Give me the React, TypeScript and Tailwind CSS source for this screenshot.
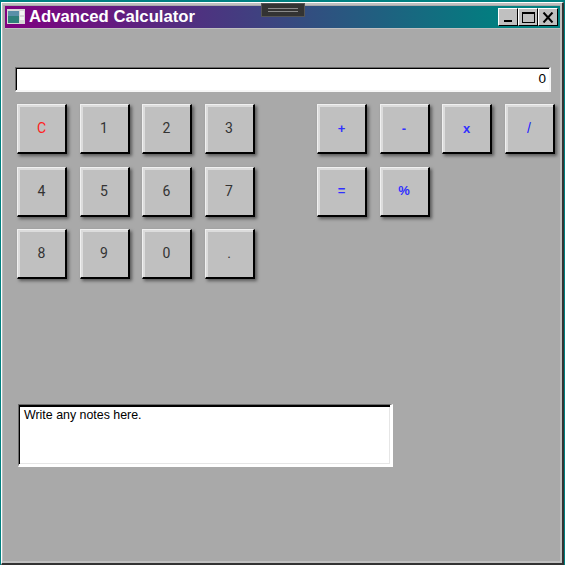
const LEFT_KEYS = ['C', '1', '2', '3', '4', '5', '6', '7', '8', '9', '0', '.'];
const RIGHT_KEYS = ['+', '-', 'x', '/', '=', '%'];

function Key({ label, color }: { label: string; color: string }) {
  return (
    <button
      className={`w-[50px] h-[50px] bg-[#c0c0c0] flex items-center justify-center border-t border-l border-t-[#f0f0f0] border-l-[#f0f0f0] border-b-2 border-r-2 border-b-black border-r-black shadow-[inset_2px_2px_0_#dcdcdc,2px_2px_3px_#5a5a5a] ${color}`}
    >
      {label}
    </button>
  );
}

function WinButton({ children }: { children: React.ReactNode }) {
  return (
    <div className="w-[20px] h-[18px] bg-[#c0c0c0] border-t border-l border-t-white border-l-white border-b border-r border-b-black border-r-black flex items-center justify-center">
      {children}
    </div>
  );
}

export default function App() {
  return (
    <div className="w-[565px] h-[565px] relative bg-[#008080] pt-[2px] pl-[1px] pr-[1px] font-['Liberation_Sans',Arial,sans-serif] overflow-hidden">
      {/* docked grab handle */}
      <div className="absolute left-[261px] top-[3px] w-[44px] h-[14px] bg-[#333333] border border-[#555555] flex flex-col items-center justify-center gap-[2px]">
        <div className="w-[30px] h-px bg-[#8a8a8a]" />
        <div className="w-[30px] h-px bg-[#8a8a8a]" />
      </div>

      <div className="h-[563px] bg-[#a9a9a9] border-t border-l border-t-white border-l-white border-r-2 border-b-2 border-r-[#333333] border-b-[#333333] flex flex-col shadow-[inset_-2px_-2px_0_#c0c0c0,inset_1px_2px_0_#c0c0c0]">
        <div className="mt-[3px] ml-[3px] mr-[2px] h-[23px] flex items-center justify-between bg-linear-to-r/srgb from-[#800080] to-[#008080] to-[90%] pl-[2px] pr-[2px] border-b border-b-[#c0c0c0]">
          <div className="flex items-center gap-[4px]">
            <svg width="18" height="15" viewBox="0 0 18 15">
              <rect width="18" height="15" fill="#d8d8d8" />
              <rect x="1" y="2" width="11" height="12" fill="#2f7f7a" />
              <rect x="1" y="2" width="11" height="5" fill="#5a8fa8" />
              <rect x="13" y="2" width="4" height="4" fill="#f4f4f4" />
              <rect x="13" y="8" width="4" height="3" fill="#f4f4f4" />
            </svg>
            <span className="text-[16.7px] font-bold text-white leading-none whitespace-nowrap pt-[1px]">Advanced Calculator</span>
          </div>
          <div className="flex">
            <WinButton>
              <div className="w-[8px] h-[2px] bg-black mt-[8px] mr-[1px]" />
            </WinButton>
            <WinButton>
              <div className="w-[13px] h-[11px] border border-black border-t-2" />
            </WinButton>
            <WinButton>
              <svg width="12" height="11" viewBox="0 0 12 11">
                <path d="M1.5 0.5 L10.5 10.5 M10.5 0.5 L1.5 10.5" stroke="black" strokeWidth="2" />
              </svg>
            </WinButton>
          </div>
        </div>

        <div className="pl-[13px] pt-[38px]">
          <div className="w-[536px] h-[25px] bg-white border-t border-l border-t-[#6a6a6a] border-l-[#6a6a6a] border-b-2 border-r-2 border-b-[#f6f6f6] border-r-[#f6f6f6] shadow-[inset_1px_1px_0_#000000] flex items-center justify-end pr-[3px] text-[13.5px] text-black">
            0
          </div>
        </div>

        <div className="flex pl-[15px] pt-[12px] gap-[62.5px]">
          <div className="grid grid-cols-[repeat(4,50px)] gap-x-[12.5px] gap-y-[12.5px] content-start">
            {LEFT_KEYS.map((k) => (
              <Key key={k} label={k} color={k === 'C' ? 'text-[14px] font-["Roboto",sans-serif] text-[#ff2020]' : 'text-[14px] font-["Roboto",sans-serif] text-[#333333]'} />
            ))}
          </div>
          <div className="grid grid-cols-[repeat(4,50px)] gap-x-[12.5px] gap-y-[12.5px] content-start">
            {RIGHT_KEYS.map((k) => (
              <Key
                key={k}
                label={k}
                color={k === '/' ? 'text-[14px] text-[#2020ff]' : 'text-[13px] font-bold text-[#3030ff]'}
              />
            ))}
          </div>
        </div>

        <div className="pl-[16px] pt-[125px]">
          <div className="w-[375px] h-[63px] bg-white border-t border-l border-t-[#6a6a6a] border-l-[#6a6a6a] border-b-[3px] border-r-[3px] border-b-white border-r-white shadow-[inset_1px_2px_0_#000000,inset_-1px_-1px_0_#e6e6e6] pl-[5px] pt-[3px] text-[12.4px] leading-[15px] text-black">
            Write any notes here.
          </div>
        </div>
      </div>
    </div>
  );
}
